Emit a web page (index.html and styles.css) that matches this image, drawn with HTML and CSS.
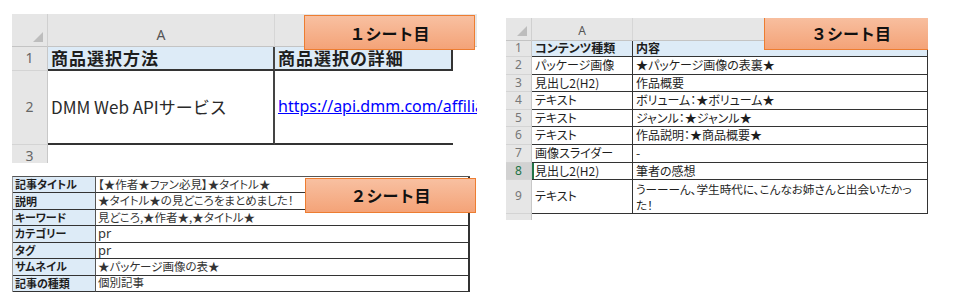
FILE: index.html
```html
<!DOCTYPE html>
<html lang="ja">
<head>
    <meta charset="UTF-8">
    <title>シート構成</title>
    <link rel="stylesheet" href="styles.css">
</head>
<body>

    <div class="board">
        <div class="left-col">

            <!-- 1シート目 : 商品選択 -->
            <div class="sheet sheet-one">
                <div class="corner"></div>
                <div class="col-head">A</div>
                <div class="col-head span-rest"></div>

                <div class="row-head">1</div>
                <div class="cell head-cell col-a">商品選択方法</div>
                <div class="cell head-cell col-b">商品選択の詳細</div>
                <div class="cell blank"></div>

                <div class="row-head">2</div>
                <div class="cell big col-a bottom">DMM Web APIサービス</div>
                <div class="cell link-cell bottom-b"><a href="#">https://api.dmm.com/affiliate/</a></div>

                <div class="row-head last">3</div>
                <div class="cell blank wide"></div>

                <div class="callout callout-one">１シート目</div>
            </div>

            <!-- 2シート目 : 記事設定 -->
            <div class="sheet-two">
                <div class="label">記事タイトル</div>
                <div class="value">【★作者★ファン必見】★タイトル★</div>
                <div class="label">説明</div>
                <div class="value">★タイトル★の見どころをまとめました！</div>
                <div class="label">キーワード</div>
                <div class="value">見どころ,★作者★,★タイトル★</div>
                <div class="label">カテゴリー</div>
                <div class="value latin">pr</div>
                <div class="label">タグ</div>
                <div class="value latin">pr</div>
                <div class="label">サムネイル</div>
                <div class="value">★パッケージ画像の表★</div>
                <div class="label">記事の種類</div>
                <div class="value">個別記事</div>

                <div class="callout callout-two">２シート目</div>
            </div>
        </div>

        <div class="right-col">

            <!-- 3シート目 : コンテンツ構成 -->
            <div class="sheet sheet-three">
                <div class="corner"></div>
                <div class="col-head">A</div>
                <div class="col-head"></div>

                <div class="row-head">1</div>
                <div class="cell head-cell">コンテンツ種類</div>
                <div class="cell head-cell">内容</div>

                <div class="row-head">2</div>
                <div class="cell">パッケージ画像</div>
                <div class="cell">★パッケージ画像の表裏★</div>

                <div class="row-head">3</div>
                <div class="cell">見出し2(H2)</div>
                <div class="cell">作品概要</div>

                <div class="row-head">4</div>
                <div class="cell">テキスト</div>
                <div class="cell">ボリューム：★ボリューム★</div>

                <div class="row-head">5</div>
                <div class="cell">テキスト</div>
                <div class="cell">ジャンル：★ジャンル★</div>

                <div class="row-head">6</div>
                <div class="cell">テキスト</div>
                <div class="cell">作品説明：★商品概要★</div>

                <div class="row-head">7</div>
                <div class="cell">画像スライダー</div>
                <div class="cell">-</div>

                <div class="row-head active">8</div>
                <div class="cell selected">見出し2(H2)</div>
                <div class="cell">筆者の感想</div>

                <div class="row-head">9</div>
                <div class="cell">テキスト</div>
                <div class="cell wrap">うーーーん、学生時代に、こんなお姉さんと出会いたかっ<br>た！</div>

                <div class="row-head last"></div>
                <div class="cell blank"></div>
                <div class="cell blank"></div>

                <div class="callout callout-three">３シート目</div>
            </div>
        </div>
    </div>

</body>
</html>
```

FILE: styles.css
```css
body {
    margin: 0;
    background: #fff;
    font-family: "Noto Sans CJK JP", "Noto Sans", sans-serif;
    color: #1e1e1e;
}

.board {
    display: flex;
    align-items: flex-start;
    gap: 29px;
    padding: 14px 0 0 12px;
}

.left-col {
    display: flex;
    flex-direction: column;
    gap: 13px;
    width: 465px;
}

.right-col {
    margin-top: 4px;
}

/* ---- common sheet parts ---- */
.sheet {
    position: relative;
    display: grid;
    background: #fff;
    overflow: hidden;
    font-feature-settings: "palt";
}

.corner,
.col-head,
.row-head {
    background: #e6e6e6;
    color: #555;
    box-sizing: border-box;
}

.corner {
    position: relative;
    border-right: 1px solid #d0d0d0;
    border-bottom: 1px solid #c4c4c4;
}

/* little grey triangle of the select-all corner */
.corner::after {
    content: "";
    position: absolute;
    right: 4px;
    bottom: 4px;
    border-left: 10px solid transparent;
    border-bottom: 10px solid #bdbdbd;
}

.col-head {
    display: flex;
    align-items: flex-end;
    justify-content: center;
    border-right: 1px solid #d6d6d6;
    border-bottom: 1px solid #c4c4c4;
    font-family: "Noto Sans", sans-serif;
    line-height: 1.2;
}

.row-head {
    display: flex;
    align-items: center;
    justify-content: center;
    border-right: 1px solid #c8c8c8;
    border-bottom: 1px solid #d4d4d4;
    font-family: "Noto Sans", sans-serif;
    line-height: 1.2;
}

.row-head.last {
    align-items: flex-start;
    border-bottom: none;
}

.cell {
    box-sizing: border-box;
    display: flex;
    align-items: center;
    white-space: nowrap;
    line-height: 1.2;
}

.head-cell {
    background: #ddebf7;
    font-weight: bold;
}

.blank {
    background: #fff;
}

/* ---- sheet 1 ---- */
.sheet-one {
    grid-template-columns: 36px 227px 178px 24px;
    grid-template-rows: 33px 24px 74px 18px;
    height: 149px;
}

.sheet-one .col-head {
    font-size: 14px;
    padding-bottom: 2px;
}

.sheet-one .col-head.span-rest {
    grid-column: 3 / 5;
    border-right: none;
}

.sheet-one .row-head {
    font-size: 14px;
    color: #666;
}

.sheet-one .row-head.last {
    padding-top: 3px;
}

.sheet-one .cell {
    padding-left: 3px;
}

.sheet-one .head-cell {
    font-size: 17px;
    letter-spacing: 1px;
    border-bottom: 2px solid #333;
}

.sheet-one .col-a {
    border-right: 2px solid #444;
}

.sheet-one .col-b {
    border-right: 2px solid #333;
}

.sheet-one .big {
    font-size: 17px;
    color: #2a2a2a;
    font-feature-settings: normal;
}

.sheet-one .bottom {
    border-bottom: 2px solid #333;
}

.link-cell {
    grid-column: 3 / 5;
}

.link-cell a {
    font-family: "Noto Sans", sans-serif;
    font-size: 16px;
    color: #0000ff;
    text-decoration: underline;
}

.link-cell.bottom-b {
    border-bottom: 2px solid #333;
    margin-right: 24px;
}

.sheet-one .wide {
    grid-column: 2 / 5;
}

/* ---- sheet 2 ---- */
.sheet-two {
    position: relative;
    display: grid;
    grid-template-columns: 83px 1fr;
    grid-auto-rows: 16.43px;
    width: 458px;
    border-top: 1px solid #555;
    border-left: 1px solid #999;
    box-sizing: border-box;
    font-size: 11px;
    line-height: 1.2;
    font-feature-settings: "palt";
}

.sheet-two .label,
.sheet-two .value {
    box-sizing: border-box;
    display: flex;
    align-items: center;
    padding-left: 2px;
    border-bottom: 1px solid #333;
    white-space: nowrap;
}

.sheet-two .label {
    background: #ddebf7;
    font-weight: bold;
    border-right: 1px solid #555;
}

.sheet-two .value {
    border-right: 2px solid #333;
    font-size: 11.5px;
    color: #333;
}

.sheet-two .latin {
    font-family: "Noto Sans", sans-serif;
    font-size: 13px;
}

/* ---- sheet 3 ---- */
.sheet-three {
    grid-template-columns: 26px 101px 295px;
    grid-template-rows: 23px 16px repeat(7, 17.6px) 34px 6px;
    width: 422px;
    font-size: 12px;
}

.sheet-three .col-head {
    font-size: 12px;
    padding-bottom: 2px;
}

.sheet-three .row-head {
    font-size: 12px;
    color: #777;
}

.sheet-three .row-head.active {
    background: #d2d2d2;
    color: #217346;
}

.sheet-three .cell {
    padding-left: 3px;
    border-bottom: 1px solid #333;
    border-right: 1px solid #333;
}

.sheet-three .cell.selected {
    box-shadow: inset 2px 0 0 #217346;
}

.sheet-three .cell.wrap {
    white-space: normal;
    line-height: 16px;
    font-size: 11.6px;
}

.sheet-three .cell.blank {
    border: none;
}

/* ---- orange labels over each sheet ---- */
.callout {
    position: absolute;
    box-sizing: border-box;
    display: flex;
    align-items: center;
    justify-content: center;
    height: 35px;
    background: linear-gradient(#f8c0a1, #f4a378);
    border: 1.5px solid #ed7d31;
    font-size: 16px;
    font-weight: bold;
    color: #111;
    font-feature-settings: normal;
}

.callout-one {
    left: 292px;
    top: 1px;
    width: 171px;
}

.callout-two {
    left: 292px;
    top: 1px;
    width: 171px;
}

.callout-three {
    left: 258px;
    top: -3px;
    width: 174px;
}
```
